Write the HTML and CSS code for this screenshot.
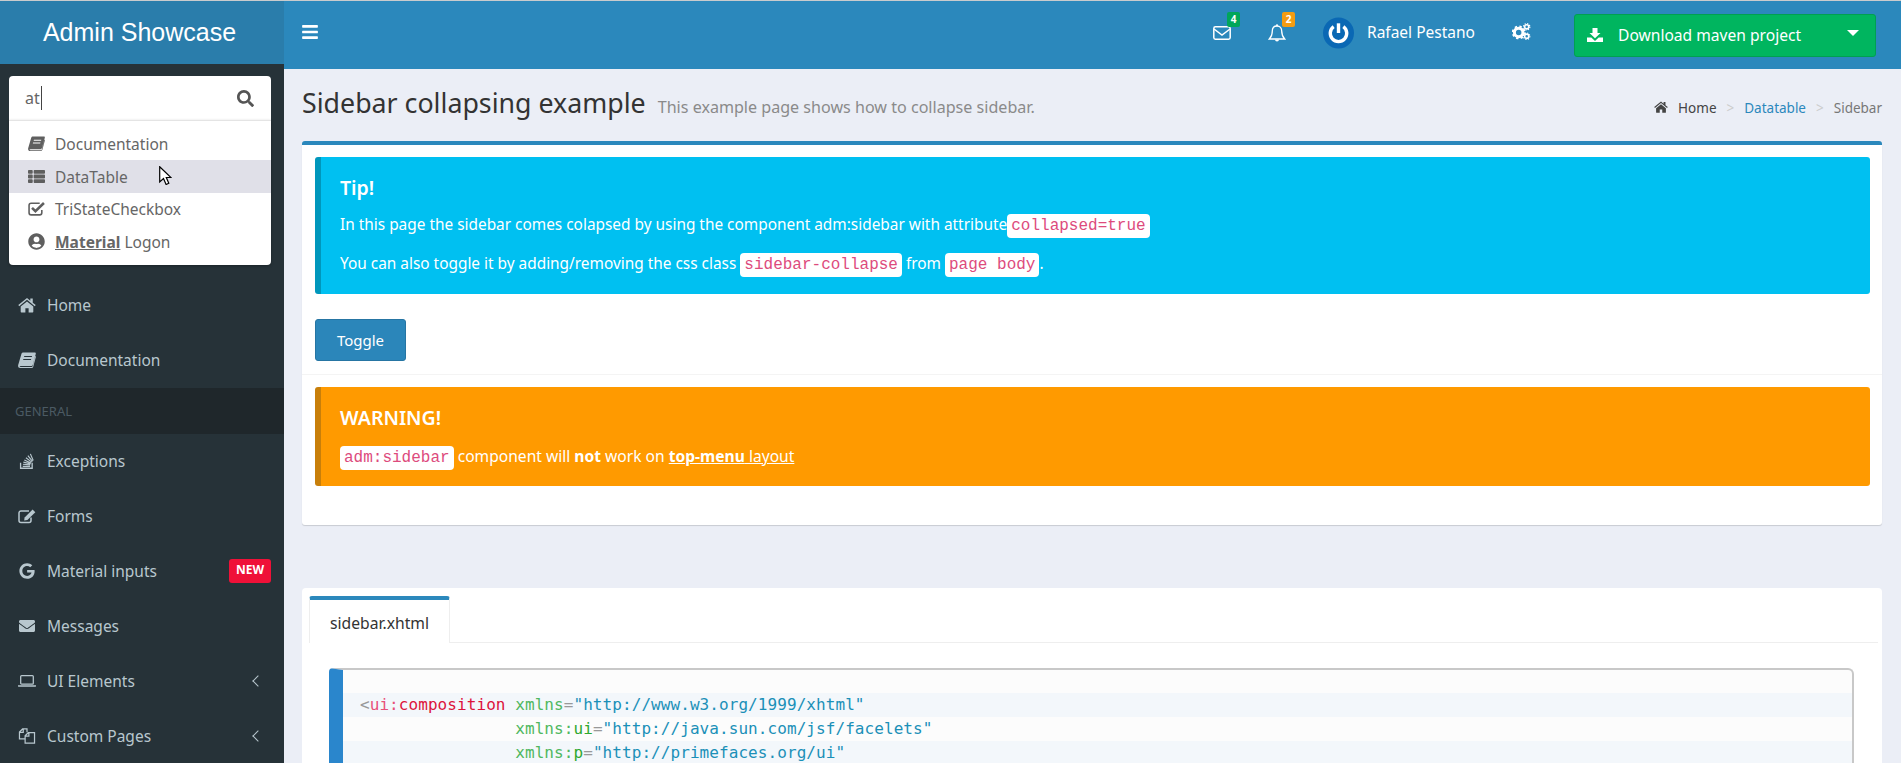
FILE: index.html
```html
<!DOCTYPE html>
<html lang="en">
<head>
    <meta charset="UTF-8">
    <meta name="viewport" content="width=device-width, initial-scale=1.0">
    <title>Admin Showcase</title>
    <link rel="stylesheet" href="styles.css">
</head>
<body>
    <!-- Icon sprite -->
    <svg class="sprite" xmlns="http://www.w3.org/2000/svg">
        <symbol id="i-bars" viewBox="0 0 448 512"><path d="M16 132h416c8.837 0 16-7.163 16-16V76c0-8.837-7.163-16-16-16H16C7.163 60 0 67.163 0 76v40c0 8.837 7.163 16 16 16zm0 160h416c8.837 0 16-7.163 16-16v-40c0-8.837-7.163-16-16-16H16c-8.837 0-16 7.163-16 16v40c0 8.837 7.163 16 16 16zm0 160h416c8.837 0 16-7.163 16-16v-40c0-8.837-7.163-16-16-16H16c-8.837 0-16 7.163-16 16v40c0 8.837 7.163 16 16 16z"/></symbol>
        <symbol id="i-search" viewBox="0 0 512 512"><path d="M505 442.7L405.3 343c-4.5-4.5-10.6-7-17-7H372c27.6-35.3 44-79.7 44-128C416 93.1 322.9 0 208 0S0 93.1 0 208s93.1 208 208 208c48.3 0 92.7-16.4 128-44v16.3c0 6.4 2.5 12.5 7 17l99.7 99.7c9.4 9.4 24.6 9.4 33.9 0l28.3-28.3c9.4-9.4 9.4-24.6.1-34zM208 336c-70.7 0-128-57.2-128-128 0-70.7 57.2-128 128-128 70.7 0 128 57.2 128 128 0 70.7-57.2 128-128 128z"/></symbol>
        <symbol id="i-envelope" viewBox="0 0 512 512"><path d="M502.3 190.8c3.9-3.1 9.7-.2 9.7 4.7V400c0 26.5-21.5 48-48 48H48c-26.5 0-48-21.5-48-48V195.6c0-5 5.7-7.8 9.7-4.7 22.4 17.4 52.1 39.5 154.1 113.6 21.1 15.4 56.7 47.8 92.2 47.6 35.7.3 72-32.8 92.3-47.6 102-74.1 131.6-96.3 154-113.7zM256 320c23.2.4 56.6-29.2 73.4-41.4 132.7-96.3 142.8-104.7 173.4-128.7 5.8-4.5 9.2-11.5 9.2-18.9v-19c0-26.5-21.5-48-48-48H48C21.5 64 0 85.5 0 112v19c0 7.4 3.4 14.3 9.2 18.9 30.6 23.9 40.7 32.4 173.4 128.7 16.8 12.2 50.2 41.8 73.4 41.4z"/></symbol>
        <symbol id="i-user" viewBox="0 0 496 512"><path d="M248 8C111 8 0 119 0 256s111 248 248 248 248-111 248-248S385 8 248 8zm0 96c48.6 0 88 39.4 88 88s-39.4 88-88 88-88-39.4-88-88 39.4-88 88-88zm0 344c-58.7 0-111.3-26.6-146.5-68.2 18.8-35.4 55.6-59.8 98.5-59.8 2.4 0 4.8.4 7.1 1.1 13 4.2 26.6 6.9 40.9 6.9 14.3 0 28-2.7 40.9-6.9 2.3-.7 4.7-1.1 7.1-1.1 42.9 0 79.7 24.4 98.5 59.8C359.3 421.4 306.7 448 248 448z"/></symbol>
        <symbol id="i-google" viewBox="0 0 488 512"><path d="M488 261.8C488 403.3 391.1 504 248 504 110.8 504 0 393.2 0 256S110.8 8 248 8c66.8 0 123 24.5 166.3 64.9l-67.5 64.9C258.5 52.6 94.3 116.6 94.3 256c0 86.5 69.1 156.6 153.7 156.6 98.2 0 135-70.4 140.8-106.9H248v-85.3h236.1c2.3 12.7 3.9 24.9 3.9 41.4z"/></symbol>
        <symbol id="i-book" viewBox="0 0 18 16"><path d="M5.2.5h11.6c.8 0 1.2.6 1 1.3l-2.9 10.6c-.3 1-1 1.6-2 1.6H2.6c-.6 0-1 .2-1 .6 0 .3.4.5 1 .5h11c.5 0 .9-.3 1-.8L17.3 4l.7.4-2.7 10c-.2.9-1 1.6-2 1.6H2.2C1 16 0 15 .1 13.7c0-.5.1-.9.3-1.4L3.4 2C3.700 1 4.300.5 5.200.5zM6.300 4l-.3 1h7.800l.3-1zm-.9 3-.3 1h7.800l.3-1z"/></symbol>
        <symbol id="i-home" viewBox="0 0 20 17"><path d="M10 .6.3 8.600l1.100 1.300L10 2.800l8.600 7.100 1.100-1.300L16.400 6V1.300h-2.700v2.400z"/><path d="M3 10.300V16a.8.8 0 0 0 .8.8h4.400v-4.600h3.600v4.600h4.400a.8.8 0 0 0 .8-.8v-5.700L10 4.600z"/></symbol>
        <symbol id="i-list" viewBox="0 0 18 14"><path d="M0 .8C0 .4.4 0 .8 0h3.400c.4 0 .8.4.8.8v2.400c0 .4-.4.8-.8.8H.8C.4 4 0 3.600 0 3.200zm6 0C6 .4 6.400 0 6.800 0h10.400c.4 0 .8.4.8.8v2.400c0 .4-.4.8-.8.8H6.800C6.400 4 6 3.600 6 3.200zM0 5.800c0-.4.4-.8.8-.8h3.400c.4 0 .8.4.8.8v2.400c0 .4-.4.8-.8.8H.8c-.4 0-.8-.4-.8-.8zm6 0c0-.4.4-.8.8-.8h10.400c.4 0 .8.4.8.8v2.400c0 .4-.4.8-.8.8H6.800c-.4 0-.8-.4-.8-.8zM0 10.800c0-.4.4-.8.8-.8h3.400c.4 0 .8.4.8.8v2.400c0 .4-.4.8-.8.8H.8c-.4 0-.8-.4-.8-.8zm6 0c0-.4.4-.8.8-.8h10.400c.4 0 .8.4.8.8v2.400c0 .4-.4.8-.8.8H6.800c-.4 0-.8-.4-.8-.8z"/></symbol>
        <symbol id="i-check" viewBox="0 0 16 14"><path d="M13 8.500V11a2 2 0 0 1-2 2H3a2 2 0 0 1-2-2V4a2 2 0 0 1 2-2h8" fill="none" stroke="currentColor" stroke-width="1.500"/><path d="M3.800 6.400 7 9.600 15 1.800" fill="none" stroke="currentColor" stroke-width="2.400"/></symbol>
        <symbol id="i-stack" viewBox="0 0 16 18"><path d="M.8 11v6.200h13V11" fill="none" stroke="currentColor" stroke-width="1.500"/><path d="M3.200 15h8.200M3.400 12.700l8.200.7M3.900 10.300l8 2M5 7.800l7.500 3.600M6.800 5.300l6.500 5M9 3l5.200 6.500M11.800 1l3.200 7.500" fill="none" stroke="currentColor" stroke-width="1.300"/></symbol>
        <symbol id="i-edit" viewBox="0 0 18 15"><path d="M13 9v3a2 2 0 0 1-2 2H3a2 2 0 0 1-2-2V4.500a2 2 0 0 1 2-2h8" fill="none" stroke="currentColor" stroke-width="1.500"/><path d="M14.600 1 17.300 3.700 9.400 11.600 6.200 12 6.600 8.900z"/></symbol>
        <symbol id="i-laptop" viewBox="0 0 20 14"><rect x="3" y="1" width="14" height="9.500" rx="1" fill="none" stroke="currentColor" stroke-width="1.400"/><path d="M0 11.800h20v.7c0 .6-.5 1-1 1H1c-.5 0-1-.4-1-1z"/></symbol>
        <symbol id="i-files" viewBox="0 0 18 17"><path d="M7 11.500H1V4.200L4.300 1H9v3.500M1.300 4.700H5V1.200" fill="none" stroke="currentColor" stroke-width="1.300"/><path d="M7 16V8.200L10.300 5H17v11zM7.300 8.700H11V5.200" fill="none" stroke="currentColor" stroke-width="1.300"/></symbol>
        <symbol id="i-envelope-o" viewBox="0 0 18 14"><rect x=".8" y=".8" width="16.400" height="12.400" rx="1.600" fill="none" stroke="currentColor" stroke-width="1.500"/><path d="M1 3 9 9l8-6" fill="none" stroke="currentColor" stroke-width="1.500"/></symbol>
        <symbol id="i-bell" viewBox="0 0 18 18"><path d="M9 2c-3 0-4.700 2.200-4.700 5 0 3.500-.8 5.700-3 8h15.400c-2.200-2.300-3-4.500-3-8 0-2.800-1.700-5-4.700-5z" fill="none" stroke="currentColor" stroke-width="1.300"/><circle cx="9" cy="1.300" r="1.100"/><path d="M7 15.500a2 2 0 0 0 4 0z"/></symbol>
        <symbol id="i-cogs" viewBox="0 0 20 18"><circle cx="7" cy="10" r="4.500" fill="none" stroke="currentColor" stroke-width="3.200"/><circle cx="7" cy="10" r="6.300" fill="none" stroke="currentColor" stroke-width="2" stroke-dasharray="2.500 2.450"/><circle cx="15.500" cy="4" r="2.200" fill="none" stroke="currentColor" stroke-width="1.700"/><circle cx="15.500" cy="4" r="3.400" fill="none" stroke="currentColor" stroke-width="1.200" stroke-dasharray="1.300 1.370"/><circle cx="15.500" cy="14" r="2.200" fill="none" stroke="currentColor" stroke-width="1.700"/><circle cx="15.500" cy="14" r="3.400" fill="none" stroke="currentColor" stroke-width="1.200" stroke-dasharray="1.300 1.370"/></symbol>
        <symbol id="i-download" viewBox="0 0 16 14"><path d="M5.500 0h5v5h3L8 10.300 2.500 5h3z"/><path d="M0 9.500h4.300L8 13l3.700-3.500H16V14H0z"/></symbol>
    </svg>

    <div class="top-line"></div>
    <div class="wrapper">
        <aside class="sidebar">
            <div class="logo">Admin Showcase</div>
            <div class="search">
                <div class="search-input">
                    <span class="search-text">at</span>
                    <svg class="search-icon"><use href="#i-search"/></svg>
                </div>
                <ul class="suggestions">
                    <li><svg class="sug-icon"><use href="#i-book"/></svg>Documentation</li>
                    <li class="hover">
                        <svg class="sug-icon"><use href="#i-list"/></svg>DataTable
                        <svg class="cursor" viewBox="0 0 13 19"><path d="M.7.700V16l3.800-3.500 2.600 6 2.700-1.200-2.500-5.800H12z" fill="#fff" stroke="#000" stroke-width="1.200"/></svg>
                    </li>
                    <li><svg class="sug-icon"><use href="#i-check"/></svg>TriStateCheckbox</li>
                    <li><svg class="sug-icon"><use href="#i-user"/></svg><span class="match">Material</span>&nbsp;Logon</li>
                </ul>
            </div>
            <ul class="menu">
                <li><svg class="menu-icon"><use href="#i-home"/></svg>Home</li>
                <li><svg class="menu-icon"><use href="#i-book"/></svg>Documentation</li>
                <li class="menu-header">GENERAL</li>
                <li><svg class="menu-icon"><use href="#i-stack"/></svg>Exceptions</li>
                <li><svg class="menu-icon"><use href="#i-edit"/></svg>Forms</li>
                <li><svg class="menu-icon"><use href="#i-google"/></svg>Material inputs<span class="new-badge">NEW</span></li>
                <li><svg class="menu-icon"><use href="#i-envelope"/></svg>Messages</li>
                <li><svg class="menu-icon"><use href="#i-laptop"/></svg>UI Elements<span class="angle"></span></li>
                <li><svg class="menu-icon"><use href="#i-files"/></svg>Custom Pages<span class="angle"></span></li>
            </ul>
        </aside>

        <div class="main">
            <header class="navbar">
                <svg class="toggle-icon"><use href="#i-bars"/></svg>
                <div class="nav-right">
                    <div class="nav-items">
                        <div class="nav-icon nav-mail">
                            <svg><use href="#i-envelope-o"/></svg>
                            <span class="count count-green">4</span>
                        </div>
                        <div class="nav-icon nav-bell">
                            <svg><use href="#i-bell"/></svg>
                            <span class="count count-orange">2</span>
                        </div>
                        <svg class="avatar" viewBox="0 0 32 32">
                            <circle cx="16" cy="16" r="16" fill="#0a68b4"/>
                            <path d="M11 9.500a8.500 8.500 0 1 0 10 0" fill="none" stroke="#fff" stroke-width="3.500"/>
                            <path d="M16 6v10" stroke="#fff" stroke-width="3.500"/>
                        </svg>
                        <span class="user-name">Rafael Pestano</span>
                        <svg class="cogs-icon"><use href="#i-cogs"/></svg>
                    </div>
                    <div class="download-btn">
                        <svg class="download-icon"><use href="#i-download"/></svg>
                        <span class="download-text">Download maven project</span>
                        <span class="caret"></span>
                    </div>
                </div>
            </header>

            <section class="content-header">
                <h1>Sidebar collapsing example</h1>
                <small>This example page shows how to collapse sidebar.</small>
                <ol class="breadcrumb">
                    <li class="crumb-home"><svg><use href="#i-home"/></svg>Home</li>
                    <li class="sep">&gt;</li>
                    <li class="crumb-link">Datatable</li>
                    <li class="sep">&gt;</li>
                    <li class="crumb-last">Sidebar</li>
                </ol>
            </section>

            <section class="content">
                <div class="box">
                    <div class="box-top">
                        <div class="callout callout-info">
                            <h4>Tip!</h4>
                            <p>In this page the sidebar comes colapsed by using the component adm:sidebar with attribute<code>collapsed=true</code></p>
                            <p>You can also toggle it by adding/removing the css class <code>sidebar-collapse</code> from <code>page body</code>.</p>
                        </div>
                        <button class="btn-toggle">Toggle</button>
                    </div>
                    <div class="box-bottom">
                        <div class="callout callout-warning">
                            <h4>WARNING!</h4>
                            <p><code>adm:sidebar</code> component will <b>not</b> work on <a href="#"><b>top-menu</b> layout</a></p>
                        </div>
                    </div>
                </div>

                <div class="tabs-box">
                    <div class="tabs-nav">
                        <div class="tab-active">sidebar.xhtml</div>
                    </div>
                    <div class="code-box">
                        <div class="code-line"></div>
                        <div class="code-line"><span class="c-punct">&lt;</span><span class="c-ns">ui:</span><span class="c-tag">composition</span> <span class="c-attr">xmlns</span><span class="c-punct">=</span><span class="c-str">"http://www.w3.org/1999/xhtml"</span></div>
                        <div class="code-line">                <span class="c-attr">xmlns:</span><span class="c-attr2">ui</span><span class="c-punct">=</span><span class="c-str">"http://java.sun.com/jsf/facelets"</span></div>
                        <div class="code-line">                <span class="c-attr">xmlns:</span><span class="c-attr2">p</span><span class="c-punct">=</span><span class="c-str">"http://primefaces.org/ui"</span></div>
                    </div>
                </div>
            </section>
        </div>
    </div>
</body>
</html>
```

FILE: styles.css
```css
* {
    margin: 0;
    padding: 0;
    box-sizing: border-box;
}

html, body {
    height: 763px;
    overflow: hidden;
}

body {
    font-family: "Noto Sans", Arial, sans-serif;
    font-size: 15px;
    color: #333;
    background-color: #ebeef6;
}

ul, ol {
    list-style: none;
}

.sprite {
    display: none;
}

svg {
    fill: currentColor;
}

.top-line {
    height: 1px;
    background-color: #c9cbcd;
}

.wrapper {
    display: flex;
    height: 762px;
}

/* Sidebar */
.sidebar {
    width: 284px;
    flex-shrink: 0;
    background-color: #263238;
    overflow: hidden;
}

.logo {
    height: 63px;
    padding-right: 5px;
    line-height: 63px;
    text-align: center;
    font-family: "Liberation Sans", Arial, sans-serif;
    font-size: 25px;
    color: #fff;
    background-color: #2a7dab;
}

.search {
    padding: 12px 13px 13px 9px;
}

.search-input {
    display: flex;
    align-items: center;
    justify-content: space-between;
    height: 44px;
    padding: 0 17px 0 16px;
    background-color: #fff;
    border-radius: 4px 4px 0 0;
}

.search-text {
    padding-right: 1px;
    font-size: 16px;
    line-height: 24px;
    color: #666;
    border-right: 1px solid #444;
}

.search-icon {
    width: 17px;
    height: 17px;
    color: #555;
}

.suggestions {
    height: 145px;
    padding: 6px 0;
    background-color: #fff;
    border-top: 1px solid #e4e4e4;
    border-radius: 0 0 4px 4px;
    box-shadow: 0 1px 3px rgba(0, 0, 0, 0.3);
}

.suggestions li {
    position: relative;
    display: flex;
    align-items: center;
    height: 33px;
    padding-left: 19px;
    font-size: 15.5px;
    color: #666;
}

.suggestions li:nth-child(n+3) {
    padding-bottom: 2px;
}

.suggestions li.hover {
    background-color: #e0e0e8;
}

.sug-icon {
    width: 17px;
    height: 17px;
    margin-right: 10px;
    color: #5f5f5f;
}

.match {
    font-weight: 700;
    text-decoration: underline;
}

.cursor {
    position: absolute;
    left: 150px;
    top: 6px;
    width: 13px;
    height: 19px;
}

.menu li {
    display: flex;
    align-items: center;
    height: 55px;
    padding: 0 13px 2px 18px;
    font-size: 15.5px;
    color: #b8c7ce;
}

.menu li.menu-header {
    height: 46px;
    padding: 0 0 0 15px;
    font-size: 13px;
    color: #4b5a63;
    background-color: #1f272b;
}

.menu-icon {
    width: 18px;
    height: 16px;
    margin-right: 11px;
    flex-shrink: 0;
}

.new-badge {
    margin-left: auto;
    width: 42px;
    height: 24px;
    line-height: 22px;
    text-align: center;
    font-size: 12px;
    font-weight: 700;
    color: #fff;
    background-color: #ef1138;
    border-radius: 3px;
}

.angle {
    margin-left: auto;
    margin-right: 9px;
    width: 8px;
    height: 8px;
    border-left: 1.5px solid #b8c7ce;
    border-bottom: 1.5px solid #b8c7ce;
    transform: rotate(45deg);
}

/* Top bar */
.main {
    flex: 1;
    min-width: 0;
}

.navbar {
    display: flex;
    align-items: center;
    justify-content: space-between;
    height: 68px;
    padding: 0 25px 0 18px;
    color: #fff;
    background-color: #2b88bc;
}

.toggle-icon {
    width: 16px;
    height: 18px;
    margin-top: -6px;
}

.nav-right {
    display: flex;
    align-items: center;
}

.nav-items {
    display: flex;
    align-items: center;
    margin-top: -4px;
}

.nav-icon {
    position: relative;
    width: 18px;
    height: 18px;
    margin-right: 37px;
}

.nav-icon svg {
    display: block;
    width: 18px;
    height: 18px;
}

.nav-mail svg {
    height: 14px;
    margin-top: 2px;
}

.count {
    position: absolute;
    left: 14px;
    top: -12px;
    width: 13px;
    height: 15px;
    line-height: 15px;
    text-align: center;
    font-size: 10px;
    font-weight: 700;
    border-radius: 2px;
}

.count-green {
    background-color: #00a65a;
}

.count-orange {
    background-color: #f39c12;
}

.avatar {
    width: 31px;
    height: 32px;
}

.user-name {
    width: 107px;
    margin-left: 13px;
    margin-top: -3px;
    font-size: 15.5px;
    white-space: nowrap;
}

.cogs-icon {
    width: 19px;
    height: 17px;
    margin-left: 38px;
    margin-top: -4px;
}

.download-btn {
    display: flex;
    align-items: center;
    width: 302px;
    height: 43px;
    margin-left: 43px;
    padding: 0 16px 0 12px;
    background-color: #00b55f;
    border: 1px solid #00a050;
    border-radius: 3px;
}

.download-icon {
    width: 16px;
    height: 14px;
}

.download-text {
    margin-left: 15px;
    font-size: 15.6px;
}

.caret {
    margin-left: auto;
    border-top: 6px solid #fff;
    border-left: 6px solid transparent;
    border-right: 6px solid transparent;
    margin-top: -4px;
}

/* Page title */
.content-header {
    display: flex;
    align-items: baseline;
    height: 72px;
    padding: 15px 19px 0 18px;
}

.content-header h1 {
    font-size: 26.75px;
    font-weight: 400;
    line-height: 38px;
    color: #333;
}

.content-header small {
    margin-left: 12px;
    font-size: 16.1px;
    color: #8a8a8a;
}

.breadcrumb {
    display: flex;
    align-items: baseline;
    margin-left: auto;
    font-size: 13.5px;
    color: #444;
}

.crumb-home svg {
    width: 14px;
    height: 12px;
    margin-right: 10px;
}

.sep {
    margin: 0 10px;
    color: #ccc;
}

.crumb-link {
    color: #2b88bc;
}

.crumb-last {
    color: #777;
}

/* Boxes */
.content {
    padding: 0 19px 0 18px;
}

.box {
    height: 384px;
    background-color: #fff;
    border-top: 4px solid #2b88bc;
    border-radius: 3px;
    box-shadow: 0 1px 1px rgba(0, 0, 0, 0.15);
}

.box-top {
    height: 230px;
    padding: 12px 12px 0 13px;
    border-bottom: 1px solid #f4f4f4;
}

.box-bottom {
    padding: 12px 12px 0 13px;
}

.callout {
    padding: 14px 20px 19px 19px;
    color: #fff;
    border-left: 6px solid;
    border-radius: 3px;
}

.callout h4 {
    font-size: 19.5px;
    font-weight: 600;
    line-height: 34px;
    margin-bottom: 8px;
}

.callout p {
    font-size: 15.4px;
    line-height: 24px;
    margin-bottom: 15px;
}

.callout p:last-child {
    margin-bottom: 0;
}

.callout a {
    color: #fff;
}

.callout-info {
    height: 137px;
    background-color: #00c0f1;
    border-left-color: #0097bc;
}

.callout-warning {
    height: 99px;
    background-color: #ff9a00;
    border-left-color: #c87f0a;
}

.callout-warning h4 {
    margin-bottom: 9px;
}

.callout-warning p {
    font-size: 15.6px;
}

code {
    padding: 3px 4px;
    font-family: "Liberation Mono", "Courier New", monospace;
    font-size: 16px;
    line-height: 16px;
    color: #dd4b7d;
    background-color: #fff;
    border-radius: 4px;
}

.btn-toggle {
    display: block;
    width: 91px;
    height: 42px;
    margin-top: 25px;
    font-family: inherit;
    font-size: 15px;
    color: #fff;
    background-color: #2b86ba;
    border: 1px solid #2675a3;
    border-radius: 3px;
}

.tabs-box {
    height: 300px;
    margin-top: 63px;
    padding: 8px 4px 0 7px;
    background-color: #fff;
    border-radius: 4px 4px 0 0;
}

.tabs-nav {
    height: 47px;
    border-bottom: 1px solid #eee;
}

.tab-active {
    width: 141px;
    height: 47px;
    line-height: 47px;
    text-align: center;
    font-size: 15.7px;
    color: #333;
    background-color: #fff;
    border-top: 4px solid #2b88bc;
    border-left: 1px solid #eee;
    border-right: 1px solid #eee;
    border-radius: 3px 3px 0 0;
}

.code-box {
    margin: 25px 24px 0 20px;
    background-color: #fcfcfc;
    border-top: 2px solid #c8c8c8;
    border-right: 2px solid #c8c8c8;
    border-left: 14px solid #2a86cc;
    border-radius: 4px 6px 0 0;
}

.code-line {
    height: 24px;
    padding-left: 17px;
    font-family: "DejaVu Sans Mono", monospace;
    font-size: 16px;
    letter-spacing: 0.07px;
    line-height: 24px;
    white-space: pre;
    color: #555;
}

.code-line:first-child {
    height: 23px;
}

.code-line:nth-child(even) {
    background-color: #f3f7fb;
}

.c-punct {
    color: #999;
}

.c-ns {
    color: #e8507a;
}

.c-tag {
    color: #dc143c;
}

.c-attr {
    color: #50b860;
}

.c-attr2 {
    color: #2fa82f;
}

.c-str {
    color: #1b90b8;
}
```
